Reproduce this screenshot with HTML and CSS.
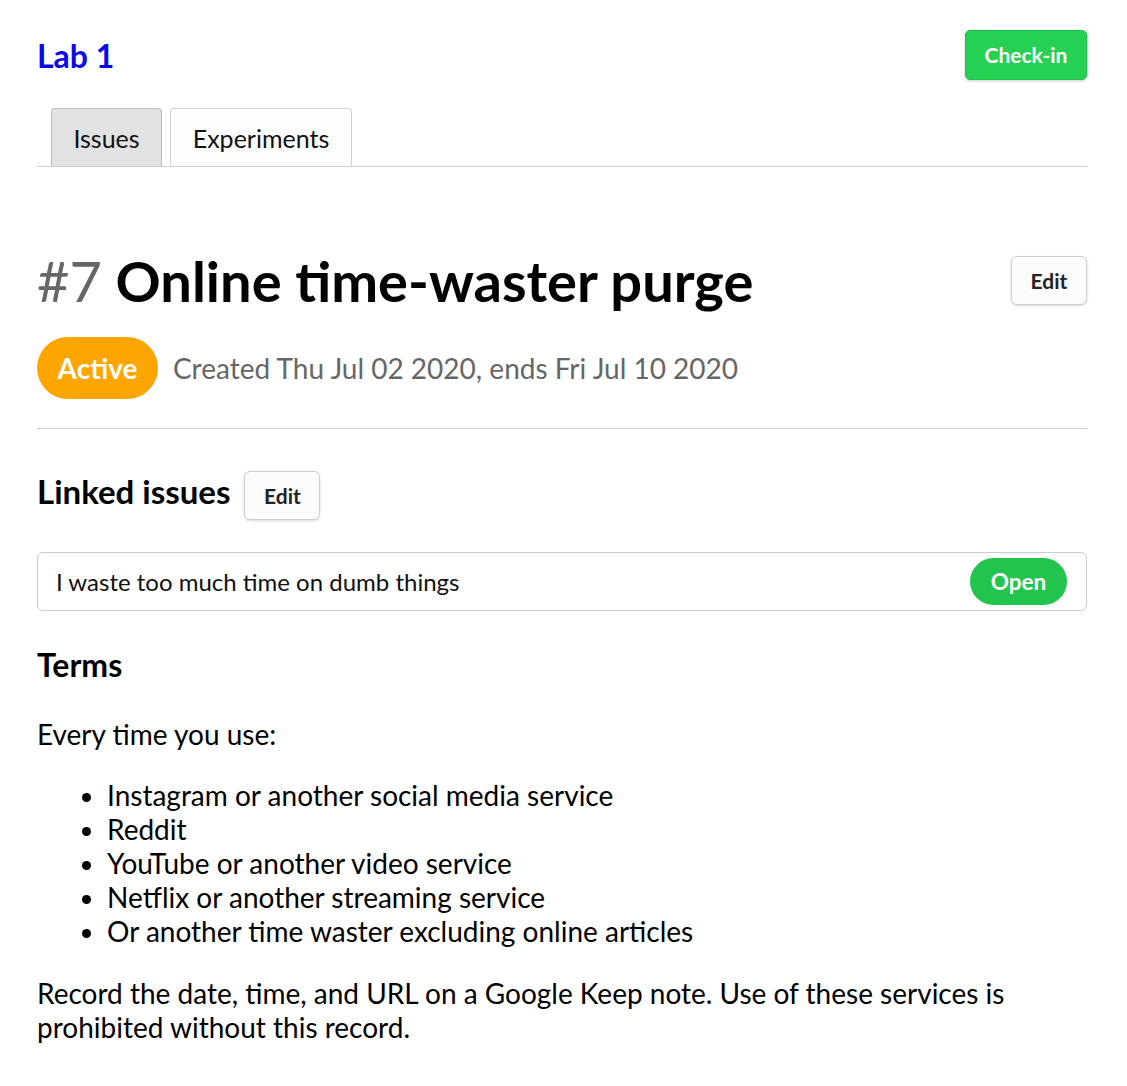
FILE: index.html
```html
<!DOCTYPE html>
<html>
<head>
<meta charset="utf-8">
<link rel="stylesheet" href="styles.css">
</head>
<body>
<div class="page">
  <header class="topbar">
    <a class="brand" href="#">Lab 1</a>
    <button class="btn-checkin">Check-in</button>
  </header>
  <nav class="tabs">
    <div class="tab tab-inactive">Issues</div>
    <div class="tab tab-active">Experiments</div>
  </nav>
  <section class="experiment">
    <div class="title-row">
      <h1 class="title"><span class="num">#7</span> Online time-waster purge</h1>
      <button class="btn-edit">Edit</button>
    </div>
    <div class="status-row">
      <span class="pill-active">Active</span>
      <span class="dates">Created Thu Jul 02 2020, ends Fri Jul 10 2020</span>
    </div>
    <hr class="divider">
    <div class="section-head">
      <h2 class="h2">Linked issues</h2>
      <button class="btn-edit">Edit</button>
    </div>
    <div class="issue-row">
      <span class="issue-text">I waste too much time on dumb things</span>
      <span class="pill-open">Open</span>
    </div>
    <h3 class="h3">Terms</h3>
    <div class="terms">
      <p class="para">Every time you use:</p>
      <ul class="list">
        <li>Instagram or another social media service</li>
        <li>Reddit</li>
        <li>YouTube or another video service</li>
        <li>Netflix or another streaming service</li>
        <li>Or another time waster excluding online articles</li>
      </ul>
      <p class="para para-last">Record the date, time, and URL on a Google Keep note. Use of these services is prohibited without this record.</p>
    </div>
  </section>
</div>
</body>
</html>
```
FILE: styles.css
```css
html, body {
  margin: 0;
  padding: 0;
  background: #fff;
}
body {
  font-family: Lato, "Open Sans", sans-serif;
  color: #000;
}
.page {
  width: 1050px;
  padding: 30px 0 0 37px;
}
.topbar {
  display: flex;
  justify-content: space-between;
  align-items: center;
  height: 50px;
}
.brand {
  color: #0a0ae8;
  font-weight: 700;
  font-size: 32px;
  text-decoration: none;
}
.btn-checkin {
  width: 122px;
  height: 50px;
  border: 1px solid #1fc24c;
  border-radius: 5px;
  background: #25d052;
  color: #fff;
  font-family: Lato, sans-serif;
  font-weight: 700;
  font-size: 21px;
  box-shadow: 0 1px 3px rgba(0,0,0,0.2);
  padding: 0 0 2px;
}
.tabs {
  display: flex;
  gap: 8px;
  margin-top: 28px;
  padding-left: 14px;
  border-bottom: 1px solid #ccc;
}
.tab {
  height: 58px;
  display: flex;
  align-items: center;
  font-size: 25px;
  border: 1px solid #c4c4c4;
  border-bottom: none;
  border-radius: 4px 4px 0 0;
  box-sizing: border-box;
  color: #111;
}
.tab-inactive {
  width: 111px;
  justify-content: center;
  background: #e2e2e2;
  border-color: #bbb;
}
.tab-active {
  width: 182px;
  justify-content: center;
  background: #fdfdfd;
  border-color: #d4d4d4;
}
.experiment {
  padding-top: 89px;
}
.title-row {
  display: flex;
  justify-content: space-between;
  align-items: center;
  height: 49px;
}
.title {
  margin: 0;
  font-size: 56px;
  font-weight: 700;
  line-height: 1;
  letter-spacing: 0;
}
.num {
  color: #666;
  font-weight: 400;
}
.btn-edit {
  width: 76px;
  height: 49px;
  border: 1px solid #cfcfcf;
  border-radius: 6px;
  background: #fcfcfc;
  color: #222;
  font-family: Lato, sans-serif;
  font-weight: 700;
  font-size: 21px;
  box-shadow: 0 1px 3px rgba(0,0,0,0.15);
  padding: 0;
}
.status-row {
  display: flex;
  align-items: center;
  gap: 15px;
  margin-top: 32px;
}
.pill-active {
  width: 121px;
  height: 62px;
  border-radius: 31px;
  background: #ffa500;
  color: #fff;
  font-size: 28px;
  font-weight: 700;
  display: flex;
  align-items: center;
  justify-content: center;
}
.dates {
  color: #666;
  font-size: 28px;
}
.divider {
  border: none;
  border-top: 1px solid #ccc;
  margin: 29px 0 0;
  height: 0;
}
.section-head {
  display: flex;
  align-items: center;
  gap: 14px;
  margin-top: 42px;
}
.h2 {
  margin: 0 0 8px;
  font-size: 33px;
  font-weight: 700;
  line-height: 1;
}
.issue-row {
  margin-top: 32px;
  height: 59px;
  border: 1px solid #ccc;
  border-radius: 6px;
  box-sizing: border-box;
  display: flex;
  align-items: center;
  justify-content: space-between;
  padding: 0 19px 0 18px;
}
.issue-text {
  font-size: 24px;
  color: #111;
}
.pill-open {
  width: 97px;
  height: 47px;
  border-radius: 24px;
  background: #22c44e;
  color: #fff;
  font-size: 22.5px;
  font-weight: 700;
  display: flex;
  align-items: center;
  justify-content: center;
}
.h3 {
  margin: 38px 0 0;
  font-size: 32px;
  font-weight: 700;
  line-height: 1;
}
.terms {
  font-size: 28px;
  line-height: 34px;
}
.para {
  margin: 36px 0 0;
}
.list {
  margin: 27px 0 0;
  padding-left: 70px;
}
.para-last {
  margin-top: 28px;
}
```
